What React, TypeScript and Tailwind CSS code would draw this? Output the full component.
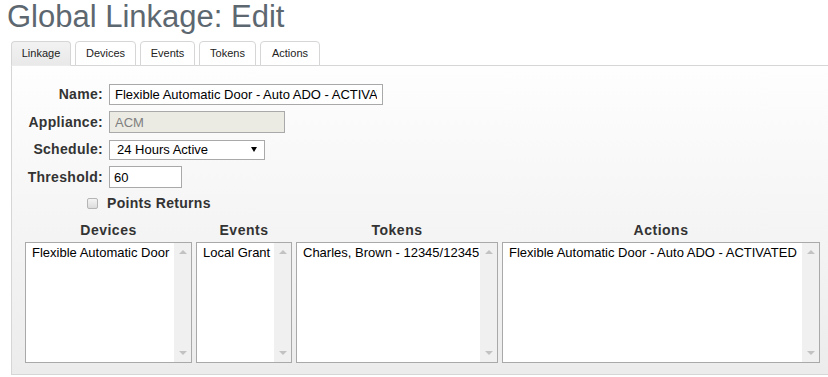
import { useState } from "react"

const tabs = [
  { name: "Linkage", w: "w-[60px]" },
  { name: "Devices", w: "w-[61px]" },
  { name: "Events", w: "w-[55px]" },
  { name: "Tokens", w: "w-[57px]" },
  { name: "Actions", w: "w-[60px]" },
]

const font = { fontFamily: '"Liberation Sans", Arial, sans-serif' }

function ScrollBar() {
  return (
    <div className="flex w-[17px] shrink-0 flex-col items-center justify-between bg-[#f0f0f0] py-[7px]">
      <span className="h-0 w-0 border-x-[4px] border-b-[4px] border-x-transparent border-b-[#c2c2c2]" />
      <span className="h-0 w-0 border-x-[4px] border-t-[4px] border-x-transparent border-t-[#c2c2c2]" />
    </div>
  )
}

function ListBox({ title, item, width }: { title: string; item: string; width: string }) {
  return (
    <div className={`flex flex-col ${width}`}>
      <div className="h-[18px] text-center text-[14px] font-bold leading-[18px] tracking-[0.5px] text-[#333]">{title}</div>
      <div className="mt-[3px] flex h-[121px] border border-[#a9a9a9] bg-white pl-[6px]">
        <div className="min-w-0 flex-1 overflow-hidden whitespace-nowrap pt-[2px] text-[13px] leading-[15px] text-black">{item}</div>
        <ScrollBar />
      </div>
    </div>
  )
}

function Row({ label, children }: { label: string; children: React.ReactNode }) {
  return (
    <div className="flex items-center">
      <label className="w-[97px] pr-[6px] text-right text-[14px] font-bold tracking-[0.3px] text-[#333]">{label}</label>
      {children}
    </div>
  )
}

export default function App() {
  const [active, setActive] = useState("Linkage")
  const [checked, setChecked] = useState(false)

  return (
    <div className="h-[377px] w-[828px] overflow-hidden bg-white" style={font}>
      {/* page title */}
      <h1 className="h-[38px] pl-[7px] text-[31px] leading-[34px] text-[#5d6770]">Global Linkage: Edit</h1>

      {/* tabs */}
      <div className="flex h-[27px] items-end gap-[4px] pl-[11px]">
        {tabs.map((t) => (
          <button
            key={t.name}
            onClick={() => setActive(t.name)}
            className={`-mb-px h-[25px] rounded-t-[4px] border border-[#d6d6d6] text-[11px] text-[#222] ${t.w} ${
              active === t.name ? "border-b-[#ececec] bg-gradient-to-b from-[#f2f2f2] to-[#e9e9e9]" : "bg-white"
            }`}
          >
            {t.name}
          </button>
        ))}
      </div>

      {/* panel */}
      <div className="ml-[11px] h-[310px] border-l border-t border-b border-[#d6d6d6] bg-gradient-to-b from-[#fefefe] to-[#ececec]">
        <div className="flex flex-col gap-[6px] pt-[18px]">
          <Row label="Name:">
            <input
              defaultValue="Flexible Automatic Door - Auto ADO - ACTIVATED"
              className="h-[21px] w-[274px] border border-[#a9a9a9] bg-white px-[5px] text-[13px] text-black outline-none"
            />
          </Row>
          <Row label="Appliance:">
            <input
              disabled
              defaultValue="ACM"
              className="h-[22px] w-[176px] border border-[#a9a9a9] bg-[#ebebe4] px-[5px] text-[13px] text-[#7f7f7f] outline-none"
            />
          </Row>
          <Row label="Schedule:">
            <div className="flex h-[20px] w-[156px] items-center justify-between border border-[#a9a9a9] bg-white pl-[7px] pr-[7px] text-[13px] leading-[18px] text-black">
              <span>24 Hours Active</span>
              <span className="h-0 w-0 border-x-[3px] border-t-[5px] border-x-transparent border-t-black" />
            </div>
          </Row>
          <Row label="Threshold:">
            <input
              defaultValue="60"
              className="h-[22px] w-[73px] border border-[#a9a9a9] bg-white px-[4px] text-[13px] text-black outline-none"
            />
          </Row>
        </div>

        <label className="ml-[75px] mt-[7px] flex h-[16px] items-center gap-[9px]">
          <input
            type="checkbox"
            checked={checked}
            onChange={(e) => setChecked(e.target.checked)}
            className="h-[11px] w-[11px] appearance-none rounded-[2px] border border-[#b5b5b5] bg-gradient-to-b from-[#f4f4f4] to-[#dcdcdc]"
          />
          <span className="text-[14px] font-bold tracking-[0.3px] text-[#333]">Points Returns</span>
        </label>

        <div className="ml-[13px] mt-[10px] flex gap-[4px]">
          <ListBox title="Devices" item="Flexible Automatic Door" width="w-[167px]" />
          <ListBox title="Events" item="Local Grant" width="w-[96px]" />
          <ListBox title="Tokens" item="Charles, Brown - 12345/12345" width="w-[202px]" />
          <ListBox title="Actions" item="Flexible Automatic Door - Auto ADO - ACTIVATED" width="w-[318px]" />
        </div>
      </div>
    </div>
  )
}
